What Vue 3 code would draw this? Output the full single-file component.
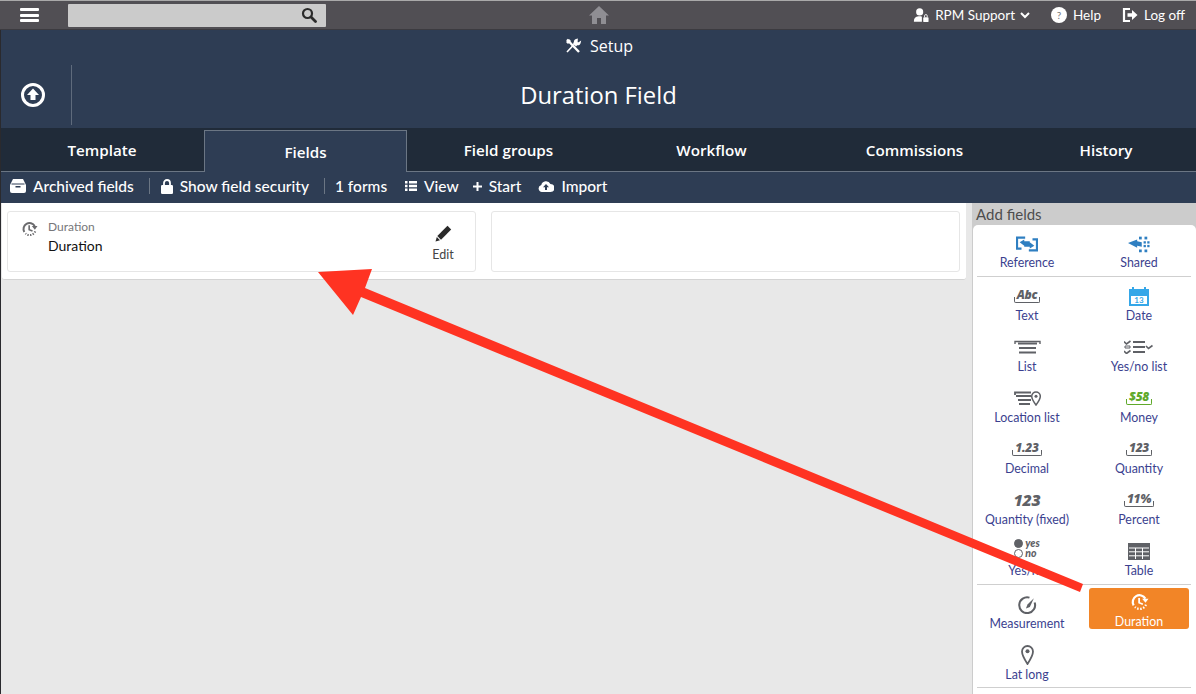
<template>
  <div class="page">
    <!-- top bar -->
    <div class="topbar">
      <button class="burger"><span></span><span></span><span></span></button>
      <div class="search">
        <svg width="16" height="16" viewBox="0 0 16 16"><circle cx="6.500" cy="6.500" r="4.500" fill="none" stroke="#2b2b2b" stroke-width="2.200"/><path d="M10 10l4.500 4.500" stroke="#2b2b2b" stroke-width="2.800" stroke-linecap="round"/></svg>
      </div>
      <svg class="home" width="22" height="20" viewBox="0 0 22 20"><path d="M11 1L1 10.500h3V19h5v-6h4v6h5v-8.500h3z" fill="#8f8e93"/></svg>
      <div class="top-links">
        <span class="top-link">
          <svg width="16" height="16" viewBox="0 0 18 17"><circle cx="7.500" cy="5" r="4" fill="#fff"/><path d="M1 16c0-5 3-6 6.500-6 1 0 2 .2 2.500.5V16z" fill="#fff"/><rect x="11.500" y="11" width="6" height="5.500" rx="1" fill="#fff"/><path d="M13 11V9.500a1.500 1.500 0 0 1 3 0V11" fill="none" stroke="#fff"/></svg>
          RPM Support
          <svg class="chev" width="10" height="8" viewBox="0 0 10 8"><path d="M1 2l4 4 4-4" fill="none" stroke="#fff" stroke-width="2"/></svg>
        </span>
        <span class="top-link">
          <svg width="16" height="16" viewBox="0 0 16 16"><circle cx="8" cy="8" r="8" fill="#fff"/><text x="8" y="11.500" text-anchor="middle" font-size="10" fill="#777" font-family="Lato, sans-serif">?</text></svg>
          Help
        </span>
        <span class="top-link">
          <svg width="16" height="16" viewBox="0 0 16 16"><path d="M8 2H2v12h6" fill="none" stroke="#fff" stroke-width="2.200"/><path d="M5.500 6.200h4.500V3l5.500 5-5.500 5V9.800H5.500z" fill="#fff"/></svg>
          Log off
        </span>
      </div>
    </div>

    <!-- heading -->
    <div class="heading">
      <div class="setup">
        <svg width="17" height="15" viewBox="0 0 17 15"><path d="M2 14L9 6.500M12 1.500c-1.500.3-2.500 1.500-2.300 3l-.7.800 2 2 .9-.8c1.500.2 2.800-.7 3.100-2.200l-1.700 1.200-1.500-1.200z" fill="#fff" stroke="#fff" stroke-width="1.600"/><path d="M2 1.500L14 14" stroke="#fff" stroke-width="2.400"/><path d="M1 4l3-3 2 2-3 3z" fill="#fff"/></svg>
        <span>Setup</span>
      </div>
      <div class="title-row">
        <div class="back">
          <svg width="26" height="26" viewBox="0 0 26 26"><circle cx="13" cy="13" r="10.500" fill="none" stroke="#fff" stroke-width="3"/><path d="M13 6.500l6 6.500h-3.500v5h-5v-5H7z" fill="#fff"/></svg>
        </div>
        <h1>Duration Field</h1>
      </div>
    </div>

    <!-- tabs -->
    <div class="tabs">
      <div v-for="tab in tabs" :key="tab" :class="['tab', { active: tab === 'Fields' }]">{{ tab }}</div>
    </div>

    <!-- toolbar -->
    <div class="toolbar">
      <span class="tool first">
        <svg width="16" height="14" viewBox="0 0 16 14"><path d="M3 0h10l3 6v6a2 2 0 0 1-2 2H2a2 2 0 0 1-2-2V6z" fill="#fff"/><path d="M1.500 5h13" stroke="#2e3d54"/><rect x="5.500" y="7" width="5" height="1.500" fill="#2e3d54"/></svg>
        Archived fields
      </span>
      <i class="sep"></i>
      <span class="tool">
        <svg width="12" height="15" viewBox="0 0 12 15"><rect y="6" width="12" height="9" rx="1.200" fill="#fff"/><path d="M3 6.500V4a3 3 0 0 1 6 0v2.500" fill="none" stroke="#fff" stroke-width="1.800"/></svg>
        Show field security
      </span>
      <i class="sep second"></i>
      <span class="tool forms">1 forms</span>
      <span class="tool view">
        <svg width="12" height="10" viewBox="0 0 12 10"><path d="M0 0h2.500v2.400H0zM4 0h8v2.400H4zM0 3.800h2.500v2.400H0zM4 3.800h8v2.400H4zM0 7.600h2.500V10H0zM4 7.600h8V10H4z" fill="#fff"/></svg>
        View
      </span>
      <span class="tool start">
        <svg width="9" height="9" viewBox="0 0 9 9"><path d="M3.500 0h2v3.500H9v2H5.500V9h-2V5.500H0v-2h3.500z" fill="#fff"/></svg>
        Start
      </span>
      <span class="tool import">
        <svg width="16" height="12" viewBox="0 0 16 12"><path d="M4 12a3.500 3.500 0 0 1-.7-6.900A4.800 4.800 0 0 1 12.400 4 4 4 0 0 1 12.500 12z" fill="#fff"/><path d="M8 4l3 3.300H9V10H7V7.300H5z" fill="#2e3d54"/></svg>
        Import
      </span>
    </div>

    <!-- content -->
    <div class="content">
      <div class="left">
        <div class="board">
          <div class="card">
            <svg class="card-icon" width="17" height="16" viewBox="0 0 24 24" v-html="durationIcon"></svg>
            <div class="card-text">
              <div class="card-kind">Duration</div>
              <div class="card-name">Duration</div>
            </div>
            <div class="edit">
              <svg width="17" height="17" viewBox="0 0 17 17"><path d="M12.500.8l3.700 3.700L6 14.700 2.300 11z" fill="#2a2a2a"/><path d="M1.800 12l3.200 3.200-4.500 1.300z" fill="#2a2a2a"/></svg>
              <span>Edit</span>
            </div>
          </div>
          <div class="card"></div>
        </div>
      </div>

      <div class="side">
        <div class="side-title">Add fields</div>
        <div class="side-box">
          <div v-for="(group, i) in groups" :key="i" :class="['group', 'group-' + i]">
            <div
              v-for="f in group"
              :key="f.label"
              :class="['field', { picked: f.label === 'Duration' }]"
            >
              <div class="field-icon">
                <span v-if="f.text" :class="['tray', { bare: f.bare }]" :style="{ color: f.color }">{{ f.text }}</span>
                <span v-else-if="f.yesno" class="yesno">
                  <span><i class="dot on"></i>yes</span>
                  <span><i class="dot"></i>no</span>
                </span>
                <svg
                  v-else
                  :width="f.w || 22"
                  :height="f.h || 22"
                  :viewBox="f.vb || '0 0 24 24'"
                  v-html="f.svg"
                ></svg>
              </div>
              <div class="field-label">{{ f.label }}</div>
            </div>
          </div>
        </div>
      </div>
    </div>

    <!-- annotation arrow -->
    <svg class="arrow" width="1196" height="694" viewBox="0 0 1196 694">
      <polygon points="318,272 372,269 365,288 1083,584 1080,592 361,297 353,315" fill="#ff3322"/>
    </svg>
  </div>
</template>

<script setup>
const tabs = ['Template', 'Fields', 'Field groups', 'Workflow', 'Commissions', 'History']

// solid arc with arrow head, dotted lower part and clock hands
const durationIcon =
  '<path d="M4.200 16.500A9 9 0 1 1 19.800 7.500" fill="none" stroke="currentColor" stroke-width="3"/>' +
  '<path d="M20.600 15.500A9 9 0 0 1 6 18.700" fill="none" stroke="currentColor" stroke-width="3" stroke-dasharray="2 2"/>' +
  '<path d="M15.500 7.500h8.500l-4 5.500z" fill="currentColor"/>' +
  '<path d="M11.500 6.500v6.500l5 2" fill="none" stroke="currentColor" stroke-width="2.400"/>'

const groups = [
  [
    {
      label: 'Reference',
      svg: '<path d="M10 5H1v12h5M14 19h9V7h-5" fill="none" stroke="#2f7fc1" stroke-width="2.600"/><path d="M4 10l5-3v2h6v3H9v2zM20 14l-5 3v-2H9v-3h6v-2z" fill="#2f7fc1"/>',
    },
    {
      label: 'Shared',
      svg: '<path d="M0 11l10-4v2l5 1v5l-5-1v2z" fill="#2f7fc1"/><g fill="#2f7fc1"><rect x="12" y="4" width="3" height="3"/><rect x="18" y="4" width="3" height="3"/><rect x="17" y="9" width="2.500" height="2.500"/><rect x="21" y="9" width="2.500" height="2.500"/><rect x="17" y="13" width="2.500" height="2.500"/><rect x="21" y="13" width="2.500" height="2.500"/><rect x="12" y="18" width="3" height="3"/><rect x="18" y="18" width="3" height="3"/></g>',
    },
  ],
  [
    { label: 'Text', text: 'Abc' },
    {
      label: 'Date',
      w: 20,
      h: 19,
      vb: '0 0 20 19',
      svg: '<path d="M0 2h20v17H0z" fill="#35a7e8"/><rect x="3" y="0" width="2" height="3" fill="#35a7e8"/><rect x="15" y="0" width="2" height="3" fill="#35a7e8"/><rect x="2" y="9" width="16" height="8" fill="#fff"/><text x="10" y="16.200" text-anchor="middle" font-size="8" font-weight="700" fill="#35a7e8" font-family="Lato, sans-serif">13</text>',
    },
    {
      label: 'List',
      w: 27,
      h: 14,
      vb: '0 0 27 14',
      svg: '<path d="M1 4V1.500h25V4" fill="none" stroke="#5f6166" stroke-width="1.400"/><path d="M4 3.500h19M5 8h17M5 12.500h17" stroke="#5f6166" stroke-width="2"/>',
    },
    {
      label: 'Yes/no list',
      w: 30,
      h: 14,
      vb: '0 0 30 14',
      svg: '<g fill="none" stroke="#5f6166" stroke-width="1.600"><path d="M0 1.500l2.500 2.500 4-3M0 11l2.500 2.500 4-3M22 6l2.500 2.500 4-3"/></g><path d="M9 2h12M9 7h12M9 12h12" stroke="#5f6166" stroke-width="2"/><path d="M1 6h5v2H1z" fill="none" stroke="#5f6166"/>',
    },
    {
      label: 'Location list',
      w: 27,
      h: 15,
      vb: '0 0 27 15',
      svg: '<path d="M1 4V1.500h16M2 5h15M4 9h13M5 13h11" fill="none" stroke="#5f6166" stroke-width="1.800"/><path d="M22 1a4.300 4.300 0 0 0-4.300 4.300c0 3 4.300 8.700 4.300 8.700s4.300-5.700 4.300-8.700A4.300 4.300 0 0 0 22 1z" fill="none" stroke="#5f6166" stroke-width="1.500"/><circle cx="22" cy="5.200" r="1.500" fill="#5f6166"/>',
    },
    { label: 'Money', text: '$58', color: '#5fa92a' },
    { label: 'Decimal', text: '1.23' },
    { label: 'Quantity', text: '123' },
    { label: 'Quantity (fixed)', text: '123', bare: true },
    { label: 'Percent', text: '11%' },
    { label: 'Yes/no', yesno: true },
    {
      label: 'Table',
      h: 17,
      vb: '0 0 22 17',
      svg: '<path d="M0 0h22v17H0z" fill="#5f6166"/><path d="M1 5h20M1 8.800h20M1 12.800h20M7.500 5v11M14.500 5v11" stroke="#fff" stroke-width="1"/>',
    },
  ],
  [
    {
      label: 'Measurement',
      w: 19,
      h: 19,
      svg: '<path d="M14.500 3.300A10 10 0 1 0 21 9.500" fill="none" stroke="#5f6166" stroke-width="2.600"/><path d="M20 4l-5 11-5 2 2-5z" fill="#5f6166"/>',
    },
    { label: 'Duration', w: 19, h: 18, svg: durationIcon },
    {
      label: 'Lat long',
      w: 13,
      h: 20,
      vb: '0 0 13 20',
      svg: '<path d="M6.500 1A5.500 5.500 0 0 0 1 6.500C1 10.500 6.500 19 6.500 19S12 10.500 12 6.500A5.500 5.500 0 0 0 6.500 1z" fill="none" stroke="#5f6166" stroke-width="1.800"/><circle cx="6.500" cy="6.300" r="2" fill="#5f6166"/>',
    },
  ],
]
</script>

<style scoped>
.page {
  position: relative;
  width: 1196px;
  height: 694px;
  overflow: hidden;
  background: #e8e8e8;
  font-family: Lato, "Open Sans", sans-serif;
  color: #fff;
}
.page::before {
  content: "";
  position: absolute;
  left: 0;
  top: 0;
  bottom: 0;
  width: 1px;
  background: #2a2a2e;
}

.topbar {
  position: relative;
  display: flex;
  align-items: center;
  height: 30px;
  box-sizing: border-box;
  border-top: 1px solid #a9a9a9;
  border-bottom: 1px solid #3c3b40;
  background: #514f54;
}
.burger {
  display: flex;
  flex-direction: column;
  gap: 2.500px;
  width: 19px;
  margin: 0 0 0 20px;
  padding: 0;
  border: 0;
  background: none;
}
.burger span {
  display: block;
  height: 3px;
  border-radius: 1px;
  background: #fff;
}
.search {
  display: flex;
  align-items: center;
  justify-content: flex-end;
  width: 258px;
  height: 23px;
  margin-left: 29px;
  padding-right: 9px;
  box-sizing: border-box;
  background: #cbcbcb;
  border-radius: 1px;
}
.home {
  position: absolute;
  left: 588px;
  top: 4px;
}
.top-links {
  display: flex;
  align-items: center;
  gap: 21px;
  margin-left: auto;
  padding-right: 11px;
}
.top-link {
  display: flex;
  align-items: center;
  gap: 6px;
  font-size: 13.500px;
}
.chev {
  margin-left: -1px;
}

.heading {
  height: 98px;
  background: #2e3d54;
}
.setup {
  display: flex;
  justify-content: center;
  align-items: center;
  gap: 8px;
  height: 31px;
  padding-left: 2px;
  font-family: "Open Sans", sans-serif;
  font-size: 16px;
}
.title-row {
  display: flex;
  height: 60px;
  margin-top: 4px;
}
.back {
  display: flex;
  align-items: center;
  justify-content: center;
  width: 65px;
  padding-right: 6px;
  border-right: 1px solid #5f6b7c;
}
h1 {
  flex: 1;
  margin: 0 71px 0 0;
  font-family: "Open Sans", sans-serif;
  font-size: 23.800px;
  font-weight: 500;
  line-height: 60px;
  text-align: center;
}

.tabs {
  display: flex;
  height: 44px;
  box-sizing: border-box;
  background: #202b39;
  border-bottom: 1px solid #6b7684;
}
.tab {
  width: 203px;
  font-family: "Open Sans", sans-serif;
  font-size: 15.200px;
  font-weight: 600;
  line-height: 45px;
  text-align: center;
}
.tab:first-child {
  width: 204px;
}
.tab:last-child {
  flex: 1;
}
.tab.active {
  position: relative;
  height: 42px;
  margin-top: 2px;
  box-sizing: border-box;
  line-height: 42px;
  background: #2e3d54;
  border: 1px solid #6b7684;
  border-bottom: 0;
}
.tab.active::after {
  content: "";
  position: absolute;
  left: 0;
  right: 0;
  bottom: -1px;
  height: 1px;
  background: #2e3d54;
}

.toolbar {
  display: flex;
  align-items: center;
  height: 31px;
  box-sizing: border-box;
  padding: 0 0 3px 10px;
  background: #2e3d54;
  font-size: 15.500px;
  font-weight: 500;
}
.tool {
  display: flex;
  align-items: center;
  gap: 7px;
}
.sep {
  width: 1px;
  height: 16px;
  margin: 0 11px 0 15px;
  background: #6b7684;
}
.sep.second {
  margin-right: 10px;
}
.forms {
  width: 49px;
  white-space: nowrap;
}
.view {
  margin-left: 21px;
}
.start {
  margin-left: 14px;
}
.import {
  margin-left: 17px;
}

.content {
  display: flex;
  height: 491px;
}
.left {
  flex: 1;
  padding-left: 2px;
  padding-right: 6px;
}
.board {
  display: flex;
  gap: 15px;
  height: 77px;
  box-sizing: border-box;
  padding: 8px 6px 7px 5px;
  background: #fff;
  border-bottom: 1px solid #d4d4d4;
  border-radius: 0 0 3px 3px;
}
.card {
  display: flex;
  flex: 1;
  height: 61px;
  box-sizing: border-box;
  padding: 7px 12px 0 13px;
  border: 1px solid #e6e6e6;
  border-radius: 3px;
  color: #111;
}
.card-icon {
  margin-top: 2px;
  color: #6b6b6e;
}
.card-text {
  flex: 1;
  margin-left: 10px;
}
.card-kind {
  font-size: 12px;
  line-height: 15px;
  color: #77777a;
}
.card-name {
  margin-top: 3px;
  font-size: 14px;
  line-height: 18px;
}
.edit {
  display: flex;
  flex-direction: column;
  align-items: center;
  gap: 5px;
  width: 22px;
  margin-top: 6px;
  margin-right: 9px;
  font-size: 12.500px;
  color: #444;
}

.side {
  width: 224px;
  box-sizing: border-box;
  padding-left: 1px;
  background: #cccccc;
}
.side-title {
  height: 22px;
  padding-left: 3px;
  font-size: 15px;
  line-height: 23px;
  color: #4d4d4d;
}
.side-box {
  height: 469px;
  box-sizing: border-box;
  padding: 0 5px 0 4px;
  background: #fff;
  border-radius: 5px 5px 0 0;
}
.group {
  display: grid;
  grid-template-columns: 100px 100px;
  column-gap: 12px;
  width: 214px;
  border-bottom: 1px solid #cfcfcf;
}
.group-1 {
  padding-bottom: 1px;
}
.group-2 {
  row-gap: 10px;
  padding: 3px 0 7px;
}
.field {
  height: 51px;
  box-sizing: border-box;
  padding-top: 7px;
  text-align: center;
  color: #3b3f8f;
}
.group-2 .field {
  height: 41px;
  padding-top: 4px;
}
.group-2 .field.picked {
  padding-top: 2px;
}
.field-icon {
  display: flex;
  align-items: center;
  justify-content: center;
  height: 24px;
  color: #5f6166;
}
.field-label {
  font-size: 12.400px;
  line-height: 14px;
}
.group-1 .field-label,
.group-2 .field-label {
  padding-top: 1px;
}
.field.picked {
  background: #f28527;
  border-radius: 3px;
  color: #fff;
}
.field.picked .field-icon {
  color: #fff;
}
.tray {
  position: relative;
  display: inline-block;
  min-width: 20px;
  height: 14px;
  padding: 0 3px;
  font-family: "Open Sans", sans-serif;
  font-size: 12px;
  font-weight: 800;
  font-style: italic;
  line-height: 12px;
  letter-spacing: -0.3px;
}
.tray::after {
  content: "";
  position: absolute;
  left: 0;
  right: 0;
  bottom: 0;
  height: 6px;
  box-sizing: border-box;
  border: 1.500px solid currentColor;
  border-top: 0;
  border-radius: 0 0 2px 2px;
}
.tray.bare {
  font-size: 16px;
  line-height: 15px;
}
.tray.bare::after {
  display: none;
}
.yesno {
  display: flex;
  flex-direction: column;
  align-items: flex-start;
  margin-top: -5px;
  font-family: Lato, sans-serif;
  font-size: 10.500px;
  font-weight: 900;
  font-style: italic;
  line-height: 13px;
}
.yesno > span {
  display: flex;
  align-items: center;
  gap: 2px;
  height: 10px;
}
.dot {
  width: 9px;
  height: 9px;
  box-sizing: border-box;
  border: 1.500px solid currentColor;
  border-radius: 50%;
}
.dot.on {
  background: currentColor;
}

.arrow {
  position: absolute;
  left: 0;
  top: 0;
  pointer-events: none;
}
</style>
